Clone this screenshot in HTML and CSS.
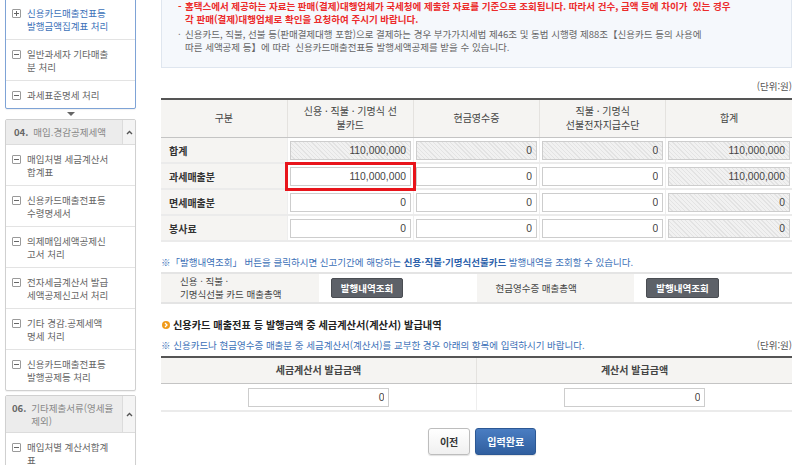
FILE: index.html
```html
<!DOCTYPE html>
<html lang="ko">
<head>
    <meta charset="UTF-8">
    <meta name="viewport" content="width=device-width, initial-scale=1.0">
    <title>신용카드매출전표등 발행금액집계표</title>
    <link rel="stylesheet" href="styles.css">
</head>
<body>
    <div class="page">
        <aside class="side">
            <div class="menu-box on">
                <ul>
                    <li class="menu-item cur"><span class="tog plus"></span><span>신용카드매출전표등<br>발행금액집계표 처리</span></li>
                    <li class="menu-item"><span class="tog"></span><span>일반과세자 기타매출<br>분 처리</span></li>
                    <li class="menu-item"><span class="tog"></span><span>과세표준명세 처리</span></li>
                </ul>
            </div>
            <div class="menu-arrow"></div>
            <div class="menu-box">
                <div class="menu-head">
                    <span class="menu-title"><b>04.</b><span>매입.경감공제세액</span></span>
                    <span class="menu-fold"><svg width="7" height="5" viewBox="0 0 7 5"><polyline points="1,4 3.5,1.5 6,4" fill="none" stroke="#555" stroke-width="1.4"/></svg></span>
                </div>
                <ul>
                    <li class="menu-item"><span class="tog"></span><span>매입처별 세금계산서<br>합계표</span></li>
                    <li class="menu-item"><span class="tog"></span><span>신용카드매출전표등<br>수령명세서</span></li>
                    <li class="menu-item"><span class="tog"></span><span>의제매입세액공제신<br>고서 처리</span></li>
                    <li class="menu-item"><span class="tog"></span><span>전자세금계산서 발급<br>세액공제신고서 처리</span></li>
                    <li class="menu-item"><span class="tog"></span><span>기타 경감.공제세액<br>명세 처리</span></li>
                    <li class="menu-item"><span class="tog"></span><span>신용카드매출전표등<br>발행공제등 처리</span></li>
                </ul>
            </div>
            <div class="menu-box gap">
                <div class="menu-head tall">
                    <span class="menu-title"><b>06.</b><span>기타제출서류(영세율<br>제외)</span></span>
                    <span class="menu-fold"><svg width="7" height="5" viewBox="0 0 7 5"><polyline points="1,4 3.5,1.5 6,4" fill="none" stroke="#555" stroke-width="1.4"/></svg></span>
                </div>
                <ul>
                    <li class="menu-item"><span class="tog"></span><span>매입처별 계산서합계<br>표</span></li>
                </ul>
            </div>
        </aside>

        <main class="content">
            <div class="notice">
                <ul>
                    <li class="warn">홈택스에서 제공하는 자료는 판매(결제)대행업체가 국세청에 제출한 자료를 기준으로 조회됩니다. 따라서 건수, 금액 등에 차이가 &nbsp;있는 경우<br>각 판매(결제)대행업체로 확인을 요청하여 주시기 바랍니다.</li>
                    <li>신용카드, 직불, 선불 등(판매결제대행 포함)으로 결제하는 경우 부가가치세법 제46조 및 동법 시행령 제88조【신용카드 등의 사용에<br>따른 세액공제 등】에 따라 &nbsp;신용카드매출전표등 발행세액공제를 받을 수 있습니다.</li>
                </ul>
            </div>

            <p class="unit">(단위:원)</p>

            <table class="grid">
                <thead>
                    <tr>
                        <th>구분</th>
                        <th>신용 · 직불 · 기명식 선<br>불카드</th>
                        <th>현금영수증</th>
                        <th>직불 · 기명식<br>선불전자지급수단</th>
                        <th>합계</th>
                    </tr>
                </thead>
                <tbody>
                    <tr>
                        <td class="lbl">합계</td>
                        <td><input class="num off" value="110,000,000" readonly></td>
                        <td><input class="num off" value="0" readonly></td>
                        <td><input class="num off" value="0" readonly></td>
                        <td><input class="num off" value="110,000,000" readonly></td>
                    </tr>
                    <tr>
                        <td class="lbl">과세매출분</td>
                        <td><input class="num mark" value="110,000,000"></td>
                        <td><input class="num" value="0"></td>
                        <td><input class="num" value="0"></td>
                        <td><input class="num off" value="110,000,000" readonly></td>
                    </tr>
                    <tr>
                        <td class="lbl">면세매출분</td>
                        <td><input class="num" value="0"></td>
                        <td><input class="num" value="0"></td>
                        <td><input class="num" value="0"></td>
                        <td><input class="num off" value="0" readonly></td>
                    </tr>
                    <tr>
                        <td class="lbl">봉사료</td>
                        <td><input class="num" value="0"></td>
                        <td><input class="num" value="0"></td>
                        <td><input class="num" value="0"></td>
                        <td><input class="num off" value="0" readonly></td>
                    </tr>
                </tbody>
            </table>

            <p class="tip">※「발행내역조회」 버튼을 클릭하시면 신고기간에 해당하는 <b>신용·직불·기명식선불카드</b> 발행내역을 조회할 수 있습니다.</p>

            <table class="sum">
                <tr>
                    <td class="lbl">신용 · 직불 ·<br>기명식선불 카드 매출총액</td>
                    <td class="act"><button class="btn-dark">발행내역조회</button></td>
                    <td class="lbl">현금영수증 매출총액</td>
                    <td class="act"><button class="btn-dark">발행내역조회</button></td>
                </tr>
            </table>

            <h3 class="sec-title">
                <svg width="8" height="8" viewBox="0 0 8 8"><circle cx="4" cy="4" r="4" fill="#f09a1a"/><polyline points="3,2 5,4 3,6" fill="none" stroke="#fff" stroke-width="1.3"/></svg>
                신용카드 매출전표 등 발행금액 중 세금계산서(계산서) 발급내역
            </h3>

            <div class="tip-row">
                <p class="tip">※ 신용카드나 현금영수증 매출분 중 세금계산서(계산서)를 교부한 경우 아래의 항목에 입력하시기 바랍니다.</p>
                <span>(단위:원)</span>
            </div>

            <table class="grid half">
                <thead>
                    <tr>
                        <th>세금계산서 발급금액</th>
                        <th>계산서 발급금액</th>
                    </tr>
                </thead>
                <tbody>
                    <tr>
                        <td><input class="num" value="0"></td>
                        <td><input class="num" value="0"></td>
                    </tr>
                </tbody>
            </table>

            <div class="actions">
                <button class="btn btn-white">이전</button>
                <button class="btn btn-blue">입력완료</button>
            </div>
        </main>
    </div>
</body>
</html>
```

FILE: styles.css
```css
* {
    box-sizing: border-box;
}

body {
    margin: 0;
    font-family: "Noto Sans CJK KR", "Liberation Sans", sans-serif;
    font-size: 9.5px;
    color: #555;
    background: #fff;
}

ul {
    list-style: none;
    margin: 0;
    padding: 0;
}

p {
    margin: 0;
}

.page {
    display: flex;
    align-items: flex-start;
    height: 465px;
    overflow: hidden;
}

/* 왼쪽 메뉴 */
.side {
    flex: none;
    width: 131px;
    margin-left: 5px;
}

.menu-box {
    border: 1px solid #d0d0d0;
    border-radius: 2px;
    background: #fff;
    box-shadow: 0 1px 1px rgba(0, 0, 0, 0.06);
}

.menu-box.on {
    border-color: #7ea3d6;
    margin-top: -2px;
}

.menu-box.gap {
    margin-top: 4px;
}

.menu-item {
    display: flex;
    padding: 8px 4px 6px 6px;
    line-height: 13px;
    border-top: 1px solid #e3e3e3;
    color: #666;
}

.menu-item:first-child {
    border-top: 0;
}

.menu-item.cur {
    color: #3d72b9;
}

.tog {
    flex: none;
    position: relative;
    width: 9px;
    height: 9px;
    margin: 2px 6px 0 0;
    border: 1px solid #9a9a9a;
    border-radius: 1px;
}

.tog::before {
    content: "";
    position: absolute;
    left: 1px;
    right: 1px;
    top: 3px;
    height: 1px;
    background: #666;
}

.tog.plus::after {
    content: "";
    position: absolute;
    top: 1px;
    bottom: 1px;
    left: 3px;
    width: 1px;
    background: #666;
}

.menu-arrow {
    width: 0;
    height: 0;
    margin: 3px auto;
    border-left: 4px solid transparent;
    border-right: 4px solid transparent;
    border-top: 4px solid #666;
}

.menu-head {
    display: flex;
    background: #ececec;
    border-bottom: 1px solid #dcdcdc;
}

.menu-title {
    flex: 1;
    display: flex;
    padding: 6px 4px 5px 8px;
    line-height: 13px;
    color: #888;
}

.menu-head.tall .menu-title {
    padding: 6px 2px 4px 6px;
    line-height: 13px;
}

.menu-title b {
    flex: none;
    margin-right: 5px;
    color: #666;
}

.menu-fold {
    flex: none;
    width: 13px;
    display: flex;
    align-items: center;
    justify-content: center;
    background: #f4f4f4;
    border-left: 1px solid #dcdcdc;
}

/* 본문 */
.content {
    flex: none;
    width: 631px;
    margin-left: 25px;
}

.notice {
    padding: 0 8px 13px 16px;
    background: #f5f8fc;
    border: 1px solid #dfe6ef;
    border-top: 0;
    line-height: 13px;
}

.notice li {
    position: relative;
    padding-left: 7px;
    white-space: nowrap;
    color: #666;
}

.notice li + li {
    margin-top: 2px;
}

.notice li::before {
    content: "·";
    position: absolute;
    left: 0;
}

.notice li.warn {
    color: #ec2b2b;
    font-weight: bold;
}

.notice li.warn::before {
    content: "-";
}

.unit {
    margin: 11px 0 5px;
    text-align: right;
    line-height: 14px;
}

.grid {
    width: 100%;
    border-collapse: collapse;
    table-layout: fixed;
    border-top: 2px solid #555;
}

.grid th {
    padding: 4px 4px 5px;
    line-height: 14px;
    font-size: 10px;
    font-weight: normal;
    color: #444;
    background: #f5f4f2;
    border-bottom: 1px solid #c4c4c4;
    border-left: 1px solid #e4e2df;
}

.grid th:first-child,
.grid td:first-child {
    border-left: 0;
}

.grid td {
    padding: 3px 2px 2px;
    border-bottom: 2px solid #ebebeb;
    border-left: 1px solid #eeeeee;
}

.grid td.lbl {
    padding-left: 8px;
    font-size: 10px;
    font-weight: bold;
    color: #333;
    background: #f5f4f2;
}

.num {
    display: block;
    width: 100%;
    height: 19px;
    padding: 0 4px;
    border: 1px solid #cdcdcd;
    font: 10.3px "Liberation Sans", Arial, sans-serif;
    color: #444;
    text-align: right;
    background: #fff;
}

.num.off {
    background: repeating-linear-gradient(45deg, #f1f1f1 0 2px, #e3e3e3 2px 3px);
}

.num.mark {
    outline: 3px solid #e8141b;
    outline-offset: 2px;
}

.tip {
    line-height: 14px;
    color: #3b70b7;
}

.tip b {
    color: #2d62ab;
}

.content > .tip {
    margin: 13px 0 3px;
}

.sum {
    width: 100%;
    border-collapse: collapse;
    table-layout: fixed;
    border-top: 2px solid #e4e4e4;
    border-bottom: 2px solid #e4e4e4;
}

.sum td {
    padding: 1px 0 1px 19px;
    line-height: 13px;
    height: 28px;
    color: #444;
}

.sum td.lbl {
    background: #f5f4f2;
}

.sum td.act {
    padding-left: 12px;
}

.btn-dark {
    height: 20px;
    padding: 0 9px;
    font-family: inherit;
    font-size: 9.5px;
    font-weight: bold;
    color: #fff;
    background: #5d6168;
    border: 1px solid #4a4d52;
    border-radius: 2px;
}

.sec-title {
    display: flex;
    align-items: center;
    gap: 3px;
    margin: 13px 0 0 1px;
    line-height: 16px;
    font-size: 10.2px;
    color: #222;
}

.tip-row {
    display: flex;
    justify-content: space-between;
    margin: 5px 0 4px;
    line-height: 14px;
}

.grid.half th {
    padding: 5px 4px 6px;
    font-weight: bold;
}

.grid.half td {
    padding: 4px 0 3px;
}

.grid.half .num {
    width: 45%;
    margin: 0 auto;
}

.actions {
    display: flex;
    justify-content: center;
    gap: 5px;
    margin-top: 16px;
    padding-left: 11px;
}

.btn {
    height: 27px;
    padding: 0 11px;
    font-family: inherit;
    font-size: 10px;
    font-weight: bold;
    border-radius: 3px;
    box-shadow: 0 1px 1px rgba(0, 0, 0, 0.12);
}

.btn-white {
    color: #333;
    background: linear-gradient(#ffffff, #f0f0f0);
    border: 1px solid #bdbdbd;
}

.btn-blue {
    color: #fff;
    background: linear-gradient(#4a7dc2, #305f9f);
    border: 1px solid #2c5894;
}
```
